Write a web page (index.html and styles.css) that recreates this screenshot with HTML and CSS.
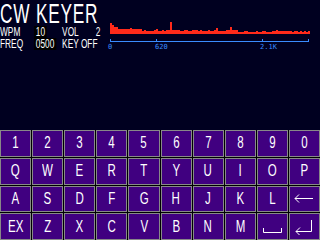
FILE: index.html
```html
<!DOCTYPE html>
<html>
<head>
<meta charset="utf-8">
<link rel="stylesheet" href="styles.css">
</head>
<body>
<div class="screen">
  <div class="header">
    <div class="info">
      <div class="scaled">
        <div class="title">CW KEYER</div>
        <div class="row">
          <span>WPM</span><span class="val">10</span><span>VOL</span><span class="end">2</span>
        </div>
        <div class="row">
          <span>FREQ</span><span class="val">0500</span><span class="wide">KEY OFF</span>
        </div>
      </div>
    </div>
    <svg class="spectrum" width="215" height="55" viewBox="0 0 215 55">
      <path class="bars" d="M5 34 V23 H7 V25 H9 V27 H13 V29 H25 V28 H27 V29 H37 V31 H39 V30 H41 V31 H49 V30 H51 V29 H53 V31 H57 V30 H59 V31 H61 V30 H65 V22 H67 V30 H75 V31 H79 V30 H83 V31 H87 V30 H93 V31 H95 V30 H97 V31 H103 V30 H105 V31 H109 V30 H111 V28 H113 V31 H121 V30 H125 V27 H127 V30 H133 V32 H139 V31 H143 V32 H151 V31 H153 V32 H157 V31 H161 V32 H167 V31 H171 V30 H173 V31 H187 V32 H189 V31 H193 V32 H195 V31 H197 V32 H199 V31 H201 V32 H203 V31 H205 V34 Z"/>
      <rect class="axis" x="5" y="41" width="199" height="1"/>
      <rect class="axis" x="5" y="39" width="1" height="2"/>
      <rect class="axis" x="51" y="39" width="1" height="2"/>
      <rect class="axis" x="157" y="39" width="1" height="2"/>
      <rect class="axis" x="203" y="39" width="1" height="2"/>
      <text class="lbl" x="3" y="49">0</text>
      <text class="lbl" x="50" y="49">620</text>
      <text class="lbl" x="155" y="49">2.1K</text>
    </svg>
  </div>
  <div class="keys">
    <div class="key"><span>1</span></div>
    <div class="key"><span>2</span></div>
    <div class="key"><span>3</span></div>
    <div class="key"><span>4</span></div>
    <div class="key"><span>5</span></div>
    <div class="key"><span>6</span></div>
    <div class="key"><span>7</span></div>
    <div class="key"><span>8</span></div>
    <div class="key"><span>9</span></div>
    <div class="key"><span>0</span></div>
    <div class="key"><span>Q</span></div>
    <div class="key"><span>W</span></div>
    <div class="key"><span>E</span></div>
    <div class="key"><span>R</span></div>
    <div class="key"><span>T</span></div>
    <div class="key"><span>Y</span></div>
    <div class="key"><span>U</span></div>
    <div class="key"><span>I</span></div>
    <div class="key"><span>O</span></div>
    <div class="key"><span>P</span></div>
    <div class="key"><span>A</span></div>
    <div class="key"><span>S</span></div>
    <div class="key"><span>D</span></div>
    <div class="key"><span>F</span></div>
    <div class="key"><span>G</span></div>
    <div class="key"><span>H</span></div>
    <div class="key"><span>J</span></div>
    <div class="key"><span>K</span></div>
    <div class="key"><span>L</span></div>
    <div class="key"><svg class="icon" width="20" height="9" viewBox="0 0 20 9"><path d="M1 4.5 H19 M1 4.5 L5 0.5 M1 4.5 L5 8.5"/></svg></div>
    <div class="key"><span>EX</span></div>
    <div class="key"><span>Z</span></div>
    <div class="key"><span>X</span></div>
    <div class="key"><span>C</span></div>
    <div class="key"><span>V</span></div>
    <div class="key"><span>B</span></div>
    <div class="key"><span>N</span></div>
    <div class="key"><span>M</span></div>
    <div class="key"><svg class="icon space" width="19" height="5" viewBox="0 0 19 5"><path d="M0.5 0 V4.5 H18.5 V0"/></svg></div>
    <div class="key"><svg class="icon enter" width="18" height="15" viewBox="0 0 18 15"><path d="M16.5 0 V11.5 H1 M1 11.5 L5 7.5 M1 11.5 L5 15.5"/></svg></div>
  </div>
</div>
</body>
</html>
```
FILE: styles.css
```css
html, body {
  margin: 0;
  padding: 0;
  background: #000020;
}
.screen {
  width: 320px;
  height: 240px;
  overflow: hidden;
  background: #000020;
  font-family: "Liberation Sans", Arial, sans-serif;
  color: #ffffff;
}
.header {
  height: 130px;
  display: flex;
  align-items: flex-start;
}
.info {
  width: 105px;
  flex: none;
  overflow: visible;
}
.scaled {
  width: 164px;
  transform: scaleX(0.64);
  transform-origin: 0 0;
}
.title {
  font-size: 27px;
  line-height: 24px;
  padding-top: 2px;
  height: 24px;
  letter-spacing: 1.2px;
  white-space: nowrap;
}
.row {
  display: grid;
  grid-template-columns: 53px 44px 44px 1fr;
  width: 157px;
  font-size: 13px;
  line-height: 12px;
  height: 12px;
  white-space: nowrap;
}
.val {
  background: #000000;
  justify-self: start;
  padding: 0 3px;
}
.end {
  text-align: right;
}
.wide {
  grid-column: 3 / 5;
}
.spectrum {
  flex: none;
  display: block;
}
.bars {
  fill: #ff2a1a;
}
.axis {
  fill: #3a8cff;
}
.lbl {
  fill: #3a8cff;
  font-family: "DejaVu Sans Mono", monospace;
  font-size: 7px;
}
.keys {
  height: 110px;
  display: grid;
  grid-template-columns: repeat(10, 1fr);
  grid-template-rows: repeat(4, 1fr);
  gap: 1px;
  background: #000000;
}
.key {
  background: #400080;
  border: 1px solid #888888;
  display: flex;
  align-items: center;
  justify-content: center;
  font-size: 16px;
  line-height: 16px;
}
.key span {
  display: inline-block;
  transform: scaleX(0.72);
}
.icon {
  display: block;
  fill: none;
  stroke: #ffffff;
  stroke-width: 1;
}
.space {
  margin-top: 8px;
}
.enter {
  margin-top: 1px;
}
```
